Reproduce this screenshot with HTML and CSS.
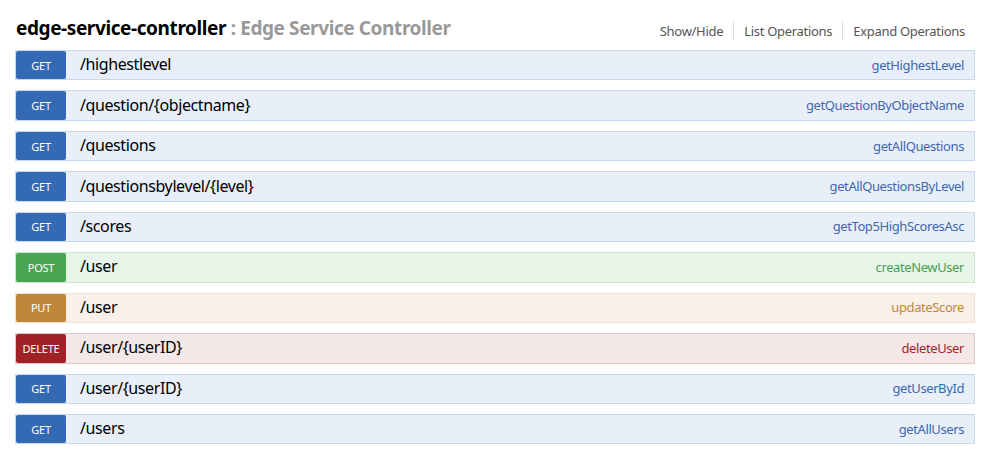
FILE: index.html
```html
<!DOCTYPE html>
<html>
<head>
<meta charset="utf-8">
<link rel="stylesheet" href="styles.css">
</head>
<body>
<div class="resource">
  <div class="heading">
    <h2 class="title">edge-service-controller<span class="desc"> : Edge Service Controller</span></h2>
    <ul class="options">
      <li>Show/Hide</li>
      <li>List Operations</li>
      <li>Expand Operations</li>
    </ul>
  </div>
  <ul class="ops">
    <li class="op get"><span class="method">GET</span><span class="path">/highestlevel</span><span class="nick">getHighestLevel</span></li>
    <li class="op get"><span class="method">GET</span><span class="path">/question/{objectname}</span><span class="nick">getQuestionByObjectName</span></li>
    <li class="op get"><span class="method">GET</span><span class="path">/questions</span><span class="nick">getAllQuestions</span></li>
    <li class="op get"><span class="method">GET</span><span class="path">/questionsbylevel/{level}</span><span class="nick">getAllQuestionsByLevel</span></li>
    <li class="op get"><span class="method">GET</span><span class="path">/scores</span><span class="nick">getTop5HighScoresAsc</span></li>
    <li class="op post"><span class="method">POST</span><span class="path">/user</span><span class="nick">createNewUser</span></li>
    <li class="op put"><span class="method">PUT</span><span class="path">/user</span><span class="nick">updateScore</span></li>
    <li class="op delete"><span class="method">DELETE</span><span class="path">/user/{userID}</span><span class="nick">deleteUser</span></li>
    <li class="op get"><span class="method">GET</span><span class="path">/user/{userID}</span><span class="nick">getUserById</span></li>
    <li class="op get"><span class="method">GET</span><span class="path">/users</span><span class="nick">getAllUsers</span></li>
  </ul>
</div>
</body>
</html>
```
FILE: styles.css
```css
* { box-sizing: border-box; }
body {
  margin: 0;
  background: #fff;
  font-family: "Noto Sans", "Open Sans", sans-serif;
}
.resource {
  width: 960px;
  margin-left: 15px;
}
.heading {
  display: flex;
  align-items: center;
  justify-content: space-between;
  height: 50px;
  padding-top: 6px;
}
.title {
  margin: 0 0 0 1px;
  font-size: 19px;
  font-weight: bold;
  color: #000;
  letter-spacing: -0.4px;
}
.desc { color: #999; }
.options {
  list-style: none;
  margin: 0;
  padding: 0;
  display: flex;
  align-items: center;
  padding-top: 6px;
}
.options li {
  font-size: 13px;
  color: #555;
  padding: 0 10px;
  border-right: 1px solid #ddd;
  line-height: 18px;
  letter-spacing: -0.3px;
}
.options li:last-child { border-right: none; padding-right: 10px; }
.ops {
  list-style: none;
  margin: 0;
  padding: 0;
}
.op {
  display: flex;
  align-items: center;
  height: 30.44px;
  margin-bottom: 10px;
  border: 1px solid;
}
.method {
  width: 50px;
  align-self: stretch;
  display: flex;
  align-items: center;
  justify-content: center;
  color: #fff;
  font-size: 11px;
  letter-spacing: -0.2px;
  border-radius: 2px;
}
.path {
  margin-left: 14px;
  font-size: 16px;
  color: #000;
  flex: 1;
  letter-spacing: -0.4px;
  padding-bottom: 2px;
}
.nick {
  font-size: 13px;
  padding-right: 10px;
  letter-spacing: -0.4px;
  padding-bottom: 1px;
}
.get { background: #e8eff8; border-color: #c5d8ec; }
.get .method { background: #336ab3; }
.get .nick { color: #3e67b0; }
.post { background: #e8f6ea; border-color: #c7e6cf; }
.post .method { background: #49a552; }
.post .nick { color: #47a055; }
.put { background: #f9f1e7; border-color: #efdfc8; }
.put .method { background: #c0873a; }
.put .nick { color: #c0853a; }
.delete { background: #f3e7e7; border-color: #e6c7c8; }
.delete .method { background: #a12226; }
.delete .nick { color: #a12428; }
```
